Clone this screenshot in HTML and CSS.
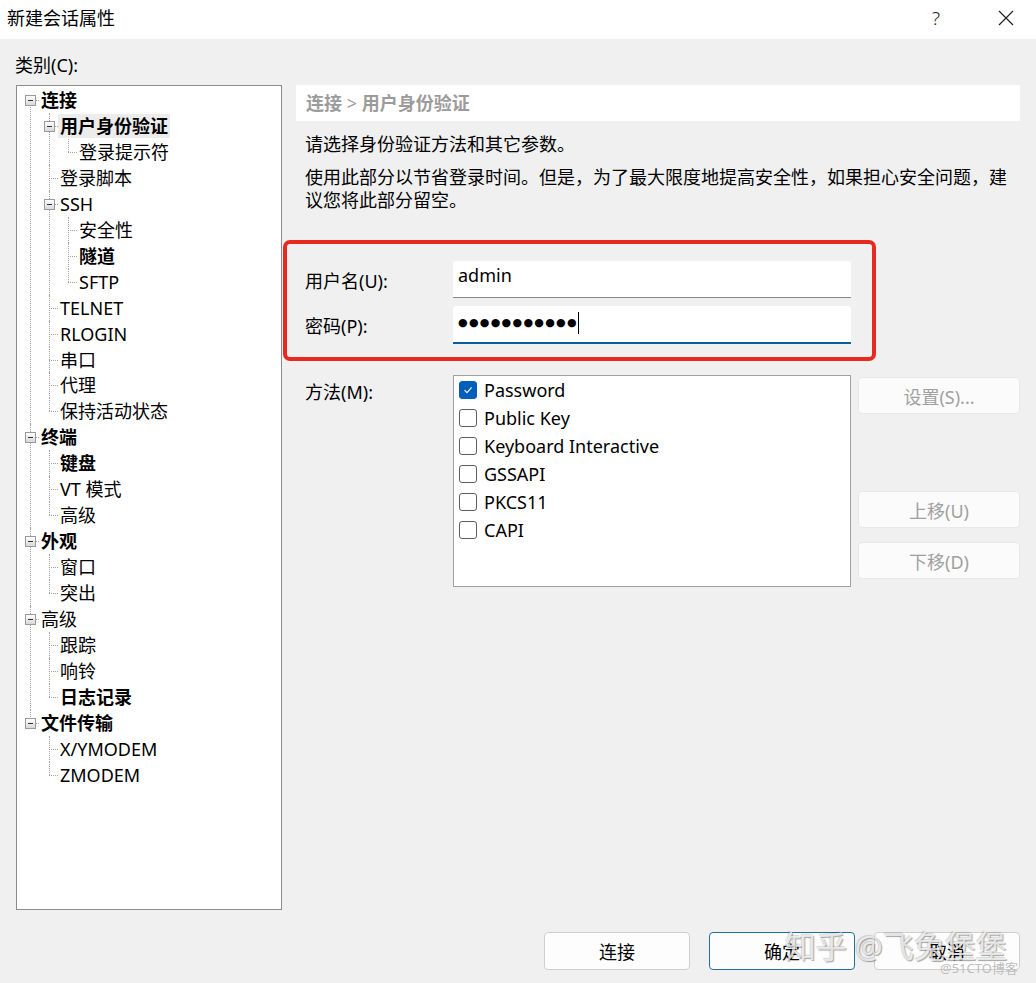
FILE: index.html
```html
<!DOCTYPE html>
<html lang="zh-CN">
<head>
    <meta charset="UTF-8">
    <title>新建会话属性</title>
    <link rel="stylesheet" href="styles.css">
</head>
<body>
    <div class="titlebar">
        <span class="title">新建会话属性</span>
        <div class="title-actions">
            <span class="help">?</span>
            <svg class="close" width="16" height="16" viewBox="0 0 16 16">
                <path d="M1 1 L15 15 M15 1 L1 15" stroke="#222" stroke-width="1.2" fill="none"/>
            </svg>
        </div>
    </div>

    <div class="main">
        <div class="cat-label">类别(C):</div>
        <div></div>

        <div class="tree-panel">
            <ul class="tree">
                <li><div class="row"><span class="toggle"></span><b>连接</b></div>
                    <ul>
                        <li><div class="row"><span class="toggle"></span><b class="selected">用户身份验证</b></div>
                            <ul>
                                <li><div class="row">登录提示符</div></li>
                            </ul>
                        </li>
                        <li><div class="row">登录脚本</div></li>
                        <li><div class="row"><span class="toggle"></span>SSH</div>
                            <ul>
                                <li><div class="row">安全性</div></li>
                                <li><div class="row"><b>隧道</b></div></li>
                                <li><div class="row">SFTP</div></li>
                            </ul>
                        </li>
                        <li><div class="row">TELNET</div></li>
                        <li><div class="row">RLOGIN</div></li>
                        <li><div class="row">串口</div></li>
                        <li><div class="row">代理</div></li>
                        <li><div class="row">保持活动状态</div></li>
                    </ul>
                </li>
                <li><div class="row"><span class="toggle"></span><b>终端</b></div>
                    <ul>
                        <li><div class="row"><b>键盘</b></div></li>
                        <li><div class="row">VT 模式</div></li>
                        <li><div class="row">高级</div></li>
                    </ul>
                </li>
                <li><div class="row"><span class="toggle"></span><b>外观</b></div>
                    <ul>
                        <li><div class="row">窗口</div></li>
                        <li><div class="row">突出</div></li>
                    </ul>
                </li>
                <li><div class="row"><span class="toggle"></span>高级</div>
                    <ul>
                        <li><div class="row">跟踪</div></li>
                        <li><div class="row">响铃</div></li>
                        <li><div class="row"><b>日志记录</b></div></li>
                    </ul>
                </li>
                <li><div class="row"><span class="toggle"></span><b>文件传输</b></div>
                    <ul>
                        <li><div class="row">X/YMODEM</div></li>
                        <li><div class="row">ZMODEM</div></li>
                    </ul>
                </li>
            </ul>
        </div>

        <div class="content">
            <div class="crumb">连接 <span class="sep">&gt;</span> 用户身份验证</div>
            <p class="intro">请选择身份验证方法和其它参数。</p>
            <p class="intro note">使用此部分以节省登录时间。但是，为了最大限度地提高安全性，如果担心安全问题，建议您将此部分留空。</p>

            <div class="highlight">
                <div class="field">
                    <label>用户名(U):</label>
                    <div class="input">admin</div>
                </div>
                <div class="field">
                    <label>密码(P):</label>
                    <div class="input active"><span class="dots">●●●●●●●●●●●</span><span class="caret"></span></div>
                </div>
            </div>

            <div class="method">
                <label>方法(M):</label>
                <div class="method-list">
                    <div class="opt"><span class="check on"><svg width="12" height="12" viewBox="0 0 12 12"><path d="M2.5 6.2 L5 8.6 L9.6 3.4" stroke="#fff" stroke-width="1.1" fill="none"/></svg></span>Password</div>
                    <div class="opt"><span class="check"></span>Public Key</div>
                    <div class="opt"><span class="check"></span>Keyboard Interactive</div>
                    <div class="opt"><span class="check"></span>GSSAPI</div>
                    <div class="opt"><span class="check"></span>PKCS11</div>
                    <div class="opt"><span class="check"></span>CAPI</div>
                </div>
                <div class="side-buttons">
                    <button class="side-btn" disabled>设置(S)...</button>
                    <button class="side-btn up" disabled>上移(U)</button>
                    <button class="side-btn down" disabled>下移(D)</button>
                </div>
            </div>
        </div>
    </div>

    <div class="footer">
        <button class="btn">连接</button>
        <button class="btn primary">确定</button>
        <button class="btn">取消</button>
        <div class="watermark">知乎 @飞兔堡堡</div>
        <div class="watermark-small">@51CTO博客</div>
    </div>
</body>
</html>
```

FILE: styles.css
```css
* {
    margin: 0;
    padding: 0;
    box-sizing: border-box;
}

body {
    width: 1036px;
    height: 983px;
    overflow: hidden;
    background: #f0f0f0;
    color: #000;
    font-family: "Noto Sans", "Noto Sans CJK SC", sans-serif;
    font-size: 18px;
}

/* title bar */
.titlebar {
    height: 39px;
    background: #fff;
    display: flex;
    align-items: center;
    justify-content: space-between;
    padding: 0 22px 0 7px;
}

.title {
    line-height: 22px;
    margin-top: -4px;
}

.title-actions {
    display: flex;
    align-items: center;
    gap: 58px;
    margin-top: -4px;
}

.help {
    font-weight: 300;
    font-size: 19px;
    color: #222;
}

/* main layout */
.main {
    display: grid;
    grid-template-columns: 266px 724px;
    column-gap: 14px;
    padding: 15px 16px 0 16px;
}

.cat-label {
    line-height: 22px;
    margin: 0 0 9px -1px;
}

.tree-panel {
    height: 825px;
    background: #fff;
    border: 1px solid #8c8c8c;
    padding-top: 1px;
}

/* tree */
.tree, .tree ul {
    list-style: none;
}

.tree ul {
    margin-left: 19px;
}

.tree li {
    position: relative;
}

.tree li::before {
    content: '';
    position: absolute;
    left: 13px;
    top: 0;
    bottom: 0;
    border-left: 1px dotted #a0a0a0;
}

.tree li:last-child::before {
    bottom: auto;
    height: 13px;
}

.tree > li:first-child::before {
    top: 13px;
}

.tree li::after {
    content: '';
    position: absolute;
    left: 13px;
    top: 13px;
    width: 9px;
    border-top: 1px dotted #a0a0a0;
}

.row {
    position: relative;
    height: 25.96px;
    line-height: 26px;
    padding-left: 24px;
    white-space: nowrap;
    z-index: 1;
}

.row b {
    font-weight: 700;
}

.selected {
    background: #ececec;
    padding: 0 2px;
    margin-left: -2px;
}

.toggle {
    position: absolute;
    left: 8px;
    top: 8px;
    width: 11px;
    height: 11px;
    border: 1px solid #9a9a9a;
    background: linear-gradient(#ffffff, #d8d8d8);
}

.toggle::after {
    content: '';
    position: absolute;
    left: 2px;
    top: 4px;
    width: 5px;
    height: 1px;
    background: #333;
}

/* right side */
.crumb {
    height: 36px;
    line-height: 36px;
    background: #fff;
    padding-left: 10px;
    color: #9b9b9b;
    font-weight: 700;
}

.crumb .sep {
    font-weight: 400;
}

.intro {
    margin: 12px 9px 0 9px;
    line-height: 23px;
}

.intro.note {
    margin-top: 10px;
}

.highlight {
    margin: 28px 0 0 -13px;
    width: 593px;
    border: 4px solid #e8291f;
    border-radius: 7px;
    padding: 17px 21px 13px 18px;
    display: flex;
    flex-direction: column;
    gap: 8px;
}

.field {
    display: flex;
    align-items: center;
}

.field label {
    width: 148px;
}

.input {
    width: 398px;
    height: 37px;
    background: #fff;
    border-bottom: 1px solid #868686;
    border-radius: 3px 3px 0 0;
    padding: 3px 5px;
    line-height: 22px;
}

.input.active {
    height: 38px;
    border-bottom: 2px solid #0f5f9c;
    display: flex;
    align-items: center;
    padding-top: 0;
}

.dots {
    font-family: "DejaVu Sans", sans-serif;
    font-size: 11px;
    letter-spacing: 1.3px;
}

.caret {
    display: inline-block;
    width: 1px;
    height: 22px;
    background: #000;
    margin-left: 0;
}

.method {
    display: flex;
    align-items: flex-start;
    margin-top: 14px;
    padding-left: 9px;
}

.method label {
    width: 148px;
    line-height: 23px;
    padding-top: 6px;
}

.method-list {
    width: 398px;
    height: 212px;
    background: #fff;
    border: 1px solid #a0a0a0;
    padding: 0 5px;
}

.opt {
    display: flex;
    align-items: center;
    gap: 7px;
    height: 28px;
}

.check {
    width: 18px;
    height: 18px;
    border: 1px solid #5f5f5f;
    border-radius: 3px;
    background: #fff;
    display: flex;
    align-items: center;
    justify-content: center;
}

.check.on {
    background: #005fb8;
    border-color: #005fb8;
}

.side-buttons {
    display: flex;
    flex-direction: column;
    margin-left: 7px;
    width: 162px;
}

.side-btn {
    height: 37px;
    margin-top: 2px;
    background: #fbfbfb;
    border: 1px solid #e8e8e8;
    border-radius: 4px;
    color: #a0a0a0;
    font-family: inherit;
    font-size: 18px;
}

.side-btn.up {
    margin-top: 77px;
}

.side-btn.down {
    margin-top: 14px;
}

/* footer */
.footer {
    position: relative;
    display: flex;
    justify-content: flex-end;
    gap: 19px;
    margin-top: 22px;
    padding-right: 16px;
}

.btn {
    width: 146px;
    height: 38px;
    background: #fdfdfd;
    border: 1px solid #cfcfcf;
    border-radius: 4px;
    font-family: inherit;
    font-size: 18px;
    color: #000;
}

.btn.primary {
    border-color: #1f6f9f;
}

.watermark {
    position: absolute;
    left: 785px;
    top: -10px;
    font-size: 31px;
    color: rgba(245, 245, 245, 0.8);
    text-shadow: 1px 1px 1px rgba(0, 0, 0, 0.35), -1px -1px 1px rgba(0, 0, 0, 0.15);
    white-space: nowrap;
}

.watermark-small {
    position: absolute;
    left: 940px;
    top: 26px;
    font-size: 13px;
    color: #bdbdbd;
    white-space: nowrap;
}
```
